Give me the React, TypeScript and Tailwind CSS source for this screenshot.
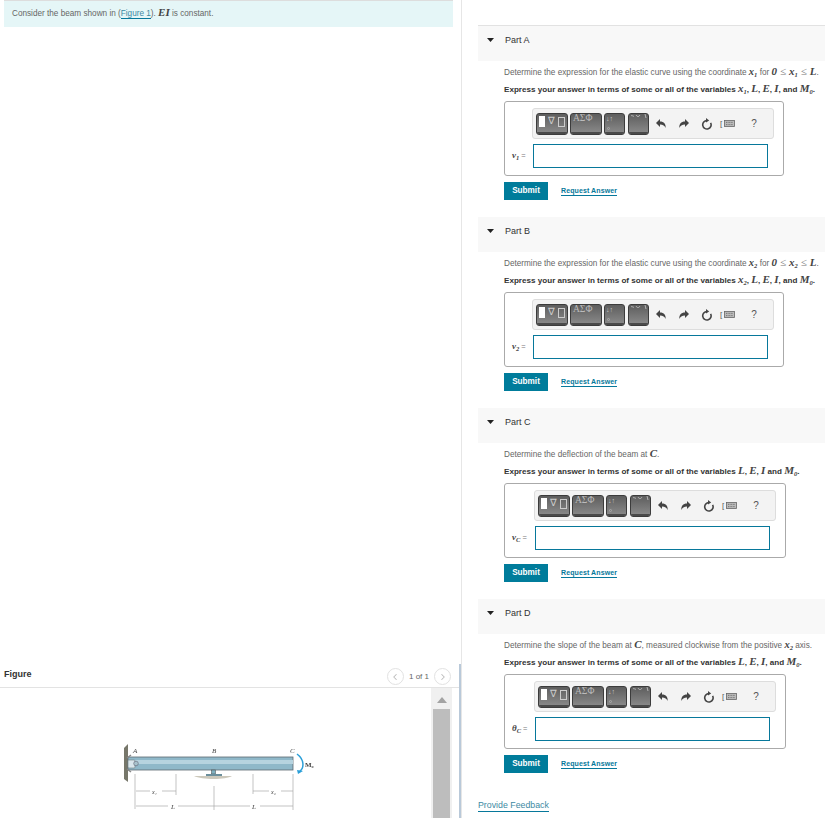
import React from 'react';
import { ChevronLeft, ChevronRight } from 'lucide-react';

const Var: React.FC<{ children: React.ReactNode; size?: string }> = ({ children, size = 'text-[11px]' }) => (
  <span className={`font-['Liberation_Serif',serif] italic font-bold leading-none ${size} text-[#444]`}>{children}</span>
);

const Sub: React.FC<{ children: React.ReactNode }> = ({ children }) => (
  <sub className="text-[6.5px] leading-none">{children}</sub>
);

const Le: React.FC = () => (
  <span className="mx-[3px] font-['Liberation_Serif',serif] text-[11px] leading-none text-[#777]">≤</span>
);

const ToolButton: React.FC<{ className: string; children?: React.ReactNode }> = ({ className, children }) => (
  <div className={`relative h-[22px] overflow-hidden rounded-[3px] border border-[#3c3c3c] bg-gradient-to-b from-[#5e5e5e] to-[#8c8c8c] ${className}`}>
    {children}
    <div className="absolute bottom-0 left-0 right-0 h-[2px] bg-[#4a4a4a]" />
  </div>
);

const UndoIcon: React.FC<{ flip?: boolean }> = ({ flip }) => (
  <svg width="10" height="10" viewBox="0 0 10 10" className={flip ? '-scale-x-100' : ''}>
    <path d="M0 4 L4 0 V2.5 C8 2.5 10 5 9.6 9 C8.8 6.8 7 5.6 4 5.6 V8 Z" fill="#444" />
  </svg>
);

const Toolbar: React.FC = () => (
  <div className="flex h-[31px] w-[242px] items-center rounded-[3px] border border-[#ddd] bg-[#f3f3f3] pl-[3px]">
    <ToolButton className="w-[32px]">
      <div className="absolute left-[2px] top-[2px] h-[11px] w-[6px] bg-white" />
      <span className="absolute left-[11px] top-0 text-[10px] leading-[14px] text-[#ccc] font-['Liberation_Serif',serif]">∇</span>
      <div className="absolute left-[21px] top-[3px] h-[10px] w-[7px] border border-[#ccc]" />
    </ToolButton>
    <ToolButton className="ml-[2px] w-[32px]">
      <span className="absolute left-[2px] -top-[2px] text-[9.5px] leading-[12px] text-[#bbb] font-['Liberation_Serif',serif]">ΑΣΦ</span>
    </ToolButton>
    <ToolButton className="ml-[2px] w-[21px]">
      <span className="absolute left-[1px] top-0 text-[7px] leading-[9px] text-[#ccc]">↓↑</span>
      <div className="absolute left-[2px] bottom-[4px] h-[3px] w-[3px] rounded-full border border-[#aaa]" />
    </ToolButton>
    <ToolButton className="ml-[3px] w-[21px]">
      <svg width="19" height="6" viewBox="0 0 19 6" className="absolute left-0 top-0">
        <path d="M2 2 C3 0.5 4 3 5 2 M7 1 C8 3 10 3 11 1 M16 0 L17 4" fill="none" stroke="#ccc" strokeWidth="0.8" />
      </svg>
    </ToolButton>
    <div className="ml-[7px]"><UndoIcon /></div>
    <div className="ml-[13px]"><UndoIcon flip /></div>
    <svg width="12" height="12" viewBox="0 0 12 12" className="ml-[12px]">
      <path d="M6 2.6 A4.2 4.2 0 1 0 9.6 4.8" fill="none" stroke="#444" strokeWidth="1.6" />
      <path d="M5 0 L8.2 2.6 L5 4.6 Z" fill="#444" />
    </svg>
    <span className="ml-[7px] text-[8px] leading-none text-[#555]">[</span>
    <svg width="11" height="7" viewBox="0 0 11 7" className="ml-[2px]">
      <rect x="0.5" y="0.5" width="10" height="6" fill="#bbb" stroke="#666" strokeWidth="0.8" />
      <path d="M2 2.4 H9 M2 4.6 H9" stroke="#666" strokeWidth="0.8" strokeDasharray="1 0.6" />
    </svg>
    <span className="ml-[16px] text-[10px] leading-none text-[#555]">?</span>
  </div>
);

type PartProps = {
  title: string;
  question: React.ReactNode;
  instruction: React.ReactNode;
  label: React.ReactNode;
  wide?: boolean;
};

const Part: React.FC<PartProps> = ({ title, question, instruction, label, wide }) => (
  <section className="h-[191px]">
    <div className="flex h-[35px] bg-[#f8f8f8] pl-[9px] pt-[8px]">
      <svg width="7" height="14" viewBox="0 0 7 14" className="mt-[-1px]">
        <path d="M0 5 H7 L3.5 9 Z" fill="#222" />
      </svg>
      <h2 className="ml-[11px] text-[9px] leading-[13px] text-[#333]">{title}</h2>
    </div>
    <div className="pl-[26px]">
      <p className="mt-[2px] h-[18px] whitespace-nowrap text-[8.2px] leading-[20px] text-[#666]">{question}</p>
      <p className="h-[16px] whitespace-nowrap text-[8.1px] font-bold leading-[17px] text-[#333]">{instruction}</p>
      <div className={`mt-[4px] h-[75px] rounded-[3px] border border-[#aaa] pt-[6px] ${wide ? 'w-[282px] pl-[29px]' : 'w-[280px] pl-[27px]'}`}>
        <Toolbar />
        <div className="mt-[5px] flex items-center">
          <span className={`whitespace-nowrap text-[7.5px] text-[#777] ${wide ? '-ml-[22px] w-[22px]' : '-ml-[20px] w-[20px]'}`}>{label} =</span>
          <div className="ml-[1px] h-[24px] w-[235px] border border-[#07789b] bg-white" />
        </div>
      </div>
      <div className="mt-[6px] flex items-center">
        <button className="h-[18px] w-[44px] bg-[#007c9b] text-[8.2px] font-bold text-white">Submit</button>
        <a className="ml-[13px] border-b border-[#07789b] text-[7px] font-bold leading-[8px] tracking-[0.1px] text-[#07789b]">Request Answer</a>
      </div>
    </div>
  </section>
);

const BeamFigure: React.FC = () => (
  <svg width="240" height="88" viewBox="0 0 240 88" className="blur-[0.4px]">
    <path d="M28 15 L24 19 V50 L28 53 Z" fill="#77776a" />
    <rect x="28" y="28" width="165" height="13" fill="#8fb8c9" stroke="#5c6a72" strokeWidth="0.8" />
    <rect x="28" y="31" width="165" height="4" fill="#b6d3df" />
    <rect x="28" y="31" width="7" height="8" rx="1" fill="#d9e6ec" stroke="#6f7c82" strokeWidth="0.6" />
    <circle cx="36" cy="34.5" r="2.3" fill="#a8c2cc" stroke="#556" strokeWidth="0.5" />
    <path d="M31 26 L27 29 M31 43 L27 40" stroke="#888" strokeWidth="1.5" />
    <rect x="111.5" y="41" width="4" height="4" fill="#7fb0c0" stroke="#444" strokeWidth="0.5" />
    <rect x="106" y="45" width="16" height="2" fill="#6c8f9c" />
    <path d="M94 47 H132 C126 51 102 51 94 47 Z" fill="#ccc8bb" />
    <g stroke="#aaa" strokeWidth="0.7" fill="none">
      <path d="M35 45 V80 M76 45 V66 M114 57 V81 M153 45 V65 M193 45 V81" />
      <path d="M36 62 H50 M62 62 H76 M153 62 H169 M181 62 H193" />
      <path d="M36 77 H68 M78 77 H150 M160 77 H193" />
    </g>
    <path d="M197 25 C204 30 205 39 199 43" fill="none" stroke="#2b9fd8" strokeWidth="1.5" />
    <path d="M197 41 L203 42 L198 45 Z" fill="#2b9fd8" />
    <g className="font-['Liberation_Serif',serif]" fill="#444" fontStyle="italic">
      <text x="33" y="24" fontSize="7">A</text>
      <text x="112" y="24" fontSize="7">B</text>
      <text x="190" y="24" fontSize="7">C</text>
      <text x="52" y="65" fontSize="6">x₁</text>
      <text x="171" y="65" fontSize="6">x₂</text>
      <text x="71" y="80" fontSize="7">L</text>
      <text x="152" y="80" fontSize="7">L</text>
      <text x="205" y="38" fontSize="7" fontWeight="700" fontStyle="normal">M₀</text>
    </g>
  </svg>
);

export default function App() {
  return (
    <div className="flex h-[818px] w-[825px] overflow-hidden bg-white font-['Liberation_Sans',Arial,sans-serif]">
      <div className="flex w-[462px] shrink-0 flex-col border-r border-[#e6e6e6]">
        <div className="ml-[4px] h-[27px] w-[449px] border-t border-[#ddd] bg-[#e5f6f7] pl-[8px] text-[8.2px] leading-[26px] text-[#666]">
          Consider the beam shown in (<a className="border-b border-[#07789b] text-[#3d8aa3]">Figure 1</a>). <Var>EI</Var> is constant.
        </div>
        <div className="mt-[637px] flex h-[154px] flex-col border-r-2 border-[#b9c9d9]">
          <div className="flex h-[24px] items-center justify-between border-b border-[#e3e3e3] pl-[4px] pr-[8px]">
            <h3 className="-mt-[2px] text-[9px] font-bold text-[#333]">Figure</h3>
            <div className="flex items-center pt-[2px]">
              <span className="flex h-[17px] w-[17px] items-center justify-center rounded-full border border-[#e2e2e2]">
                <ChevronLeft className="h-[10px] w-[10px] text-[#bbb]" strokeWidth={2.5} />
              </span>
              <span className="mx-[5px] text-[8px] text-[#666]">1 of 1</span>
              <span className="flex h-[17px] w-[17px] items-center justify-center rounded-full border border-[#e2e2e2]">
                <ChevronRight className="h-[10px] w-[10px] text-[#bbb]" strokeWidth={2.5} />
              </span>
            </div>
          </div>
          <div className="flex min-h-0 flex-1">
            <div className="ml-[4px] flex w-[427px] justify-center pl-[5px] pt-[41px]">
              <BeamFigure />
            </div>
            <div className="flex w-[21px] flex-col items-center bg-[#f0f0f0]">
              <svg width="10" height="6" viewBox="0 0 10 6" className="mt-[9px] shrink-0">
                <path d="M5 0 L10 6 H0 Z" fill="#a3a3a3" />
              </svg>
              <div className="mt-[6px] w-[17px] flex-1 bg-[#bdbdbd]" />
            </div>
          </div>
        </div>
      </div>
      <div className="ml-[16px] mt-[25px] flex-1 self-start border-t border-[#e2e2e2]">
        <Part
          title="Part A"
          question={<>Determine the expression for the elastic curve using the coordinate <Var size="text-[10.5px]">x<Sub>1</Sub></Var> for <Var>0</Var><Le /><Var>x<Sub>1</Sub></Var><Le /><Var>L</Var>.</>}
          instruction={<>Express your answer in terms of some or all of the variables <Var>x<Sub>1</Sub></Var>, <Var>L</Var>, <Var>E</Var>, <Var>I</Var>, and <Var>M<Sub>0</Sub></Var>.</>}
          label={<Var size="text-[9px]">v<Sub>1</Sub></Var>}
        />
        <Part
          title="Part B"
          question={<>Determine the expression for the elastic curve using the coordinate <Var size="text-[10.5px]">x<Sub>2</Sub></Var> for <Var>0</Var><Le /><Var>x<Sub>2</Sub></Var><Le /><Var>L</Var>.</>}
          instruction={<>Express your answer in terms of some or all of the variables <Var>x<Sub>2</Sub></Var>, <Var>L</Var>, <Var>E</Var>, <Var>I</Var>, and <Var>M<Sub>0</Sub></Var>.</>}
          label={<Var size="text-[9px]">v<Sub>2</Sub></Var>}
        />
        <Part
          title="Part C"
          question={<>Determine the deflection of the beam at <Var>C</Var>.</>}
          instruction={<>Express your answer in terms of some or all of the variables <Var>L</Var>, <Var>E</Var>, <Var>I</Var> and <Var>M<Sub>0</Sub></Var>.</>}
          label={<Var size="text-[9px]">v<Sub>C</Sub></Var>}
          wide
        />
        <Part
          title="Part D"
          question={<>Determine the slope of the beam at <Var>C</Var>, measured clockwise from the positive <Var size="text-[10.5px]">x<Sub>2</Sub></Var> axis.</>}
          instruction={<>Express your answer in terms of some or all of the variables <Var>L</Var>, <Var>E</Var>, <Var>I</Var>, and <Var>M<Sub>0</Sub></Var>.</>}
          label={<Var size="text-[9px]">θ<Sub>C</Sub></Var>}
          wide
        />
        <a className="mt-[10px] block w-fit border-b border-[#07789b] text-[8.8px] leading-[11px] text-[#3d8aa3]">Provide Feedback</a>
      </div>
    </div>
  );
}
